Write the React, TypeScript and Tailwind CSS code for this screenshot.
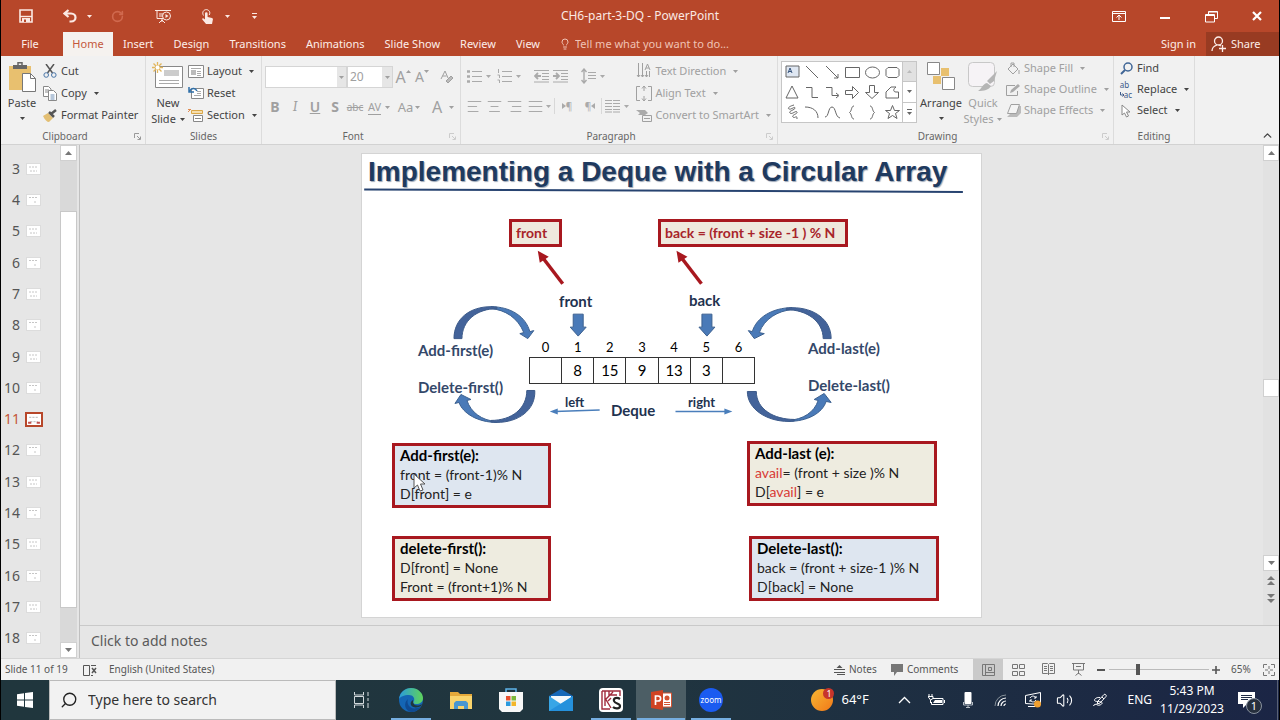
import type { ReactNode } from "react";
import {
  AlignCenter,
  AlignJustify,
  AlignLeft,
  AlignRight,
  ChevronUp,
  Lightbulb,
  RotateCw,
  Search,
  Volume2,
} from "lucide-react";

const TABS = ["Insert", "Design", "Transitions", "Animations", "Slide Show", "Review", "View"];
const THUMBNAILS = [3, 4, 5, 6, 7, 8, 9, 10, 11, 12, 13, 14, 15, 16, 17, 18];
const CURRENT_SLIDE = 11;
const DEQUE = ["", "8", "15", "9", "13", "3", ""];

function Icon({
  w = 16,
  h = 16,
  className = "",
  children,
}: {
  w?: number;
  h?: number;
  className?: string;
  children: ReactNode;
}) {
  return (
    <svg
      width={w}
      height={h}
      viewBox={`0 0 ${w} ${h}`}
      fill="none"
      stroke="currentColor"
      className={`shrink-0 ${className}`}
      aria-hidden="true"
    >
      {children}
    </svg>
  );
}

function Caret({ className = "" }: { className?: string }) {
  return (
    <Icon w={5} h={3} className={className}>
      <path d="M0 0h5L2.5 3z" fill="currentColor" stroke="none" />
    </Icon>
  );
}

function Launcher({ className = "" }: { className?: string }) {
  return (
    <button type="button" aria-label="More options" className={`absolute right-1 bottom-1 ${className}`}>
      <Icon w={7} h={7}>
        <path d="M.5 5V.5H5M3 3l3 3M6.5 3.5v3h-3" />
      </Icon>
    </button>
  );
}

function Group({
  label,
  className,
  launcher,
  children,
}: {
  label: string;
  className: string;
  launcher?: string;
  children: ReactNode;
}) {
  return (
    <section className={`relative flex shrink-0 flex-col border-r border-[#dcdcdc] ${className}`}>
      <div className="flex flex-1 pt-1">{children}</div>
      <div className="h-4 text-center text-[10px] leading-4 text-[#666]">{label}</div>
      {launcher ? <Launcher className={launcher} /> : null}
    </section>
  );
}

function Command({
  icon,
  label,
  caret,
  className = "h-[22px]",
}: {
  icon: ReactNode;
  label: string;
  caret?: boolean;
  className?: string;
}) {
  return (
    <button type="button" className={`flex items-center gap-[3px] whitespace-nowrap ${className}`}>
      <span className="flex w-4 justify-center">{icon}</span>
      {label}
      {caret ? <Caret className="ml-1" /> : null}
    </button>
  );
}

function Tool({ label, className, children }: { label: string; className: string; children: ReactNode }) {
  return (
    <button
      type="button"
      aria-label={label}
      className={`flex h-5 shrink-0 items-center justify-center ${className}`}
    >
      {children}
    </button>
  );
}

function Divider() {
  return <span className="h-4 w-px shrink-0 bg-[#d8d8d8]" />;
}

function TitleBar() {
  return (
    <div className="relative flex h-8 items-center text-[#fbe9e3]">
      <button type="button" aria-label="Save" className="ml-[18px]">
        <Icon w={14} h={14}>
          <path d="M1 1h12v12H1z" strokeWidth="1.6" />
          <path d="M1 7.5h12" strokeWidth="1.4" />
          <path d="M3 9h8v4H3z" fill="currentColor" stroke="none" />
          <path d="M5 10.500h2V13H5z" fill="#b7472a" stroke="none" />
        </Icon>
      </button>
      <button type="button" aria-label="Undo" className="ml-[30px] flex items-center gap-[10px]">
        <Icon w={14} h={14}>
          <path d="M5.500 1L1.500 4.500l4 3.500M2 4.500h6c6 0 6 8 0 8H6.500" strokeWidth="2.200" />
        </Icon>
        <Caret />
      </button>
      <button type="button" aria-label="Redo" className="ml-[19px] text-[#d0694e]">
        <RotateCw size={13} strokeWidth={3} />
      </button>
      <button type="button" aria-label="Start from beginning" className="ml-[31px]">
        <Icon w={17} h={15}>
          <path d="M0 1.500h16M2 2v7.500h6M4 5h4M4 7h3M7 10v3M4 14l3-3 3 3" />
          <circle cx="11.500" cy="7" r="4" />
          <path d="M10.500 5l3 2-3 2z" fill="currentColor" stroke="none" />
        </Icon>
      </button>
      <button type="button" aria-label="Touch mode" className="ml-[30px] flex items-center gap-[12px]">
        <Icon w={11} h={15}>
          <path
            d="M3 4.500a1.300 1.300 0 0 1 2.600 0V8l4.400 1c1 .3 1 1 .8 2l-.8 4H4L.3 10.500c-.5-1 .5-1.600 1.300-1L3 10.500z"
            fill="currentColor"
            stroke="none"
          />
          <path d="M1.500 6.500C-.5 3 2 .6 4.300.6S9 3 7.200 6" />
        </Icon>
        <Caret />
      </button>
      <button type="button" aria-label="Customize toolbar" className="ml-[22px]">
        <Icon w={5} h={6}>
          <path d="M0 .5h5" />
          <path d="M0 3h5L2.500 6z" fill="currentColor" stroke="none" />
        </Icon>
      </button>
      <h1 className="absolute left-1/2 -translate-x-1/2 text-xs whitespace-nowrap">CH6-part-3-DQ - PowerPoint</h1>
      <div className="mr-[17px] ml-auto flex items-center gap-[34px] text-white">
        <button type="button" aria-label="Ribbon display options">
          <Icon w={14} h={11}>
            <path d="M.5.500h13v10H.5zM.5 2.500h13M7 9V4M4.500 6.500L7 4l2.500 2.500" />
          </Icon>
        </button>
        <button type="button" aria-label="Minimize">
          <Icon w={11} h={12}>
            <path d="M0 8h10" strokeWidth="2" />
          </Icon>
        </button>
        <button type="button" aria-label="Restore">
          <Icon w={13} h={13}>
            <path d="M3.500 4V1.500h9v7H10M3.500 2h9" />
            <path d="M.5 4.500h9v7.500h-9zM.5 5.500h9" />
          </Icon>
        </button>
        <button type="button" aria-label="Close">
          <Icon w={10} h={10}>
            <path d="M1 1l8 8M9 1L1 9" strokeWidth="2.200" />
          </Icon>
        </button>
      </div>
    </div>
  );
}

function TabBar() {
  return (
    <nav className="flex h-6 items-center text-[11px] text-[#fdeee9]">
      <button type="button" className="w-[62px] pr-1">
        File
      </button>
      <button type="button" className="h-full w-[50px] bg-[#f5f2ef] text-[#c4593c]">
        Home
      </button>
      {TABS.map((tab) => (
        <button key={tab} type="button" className="px-[10px] whitespace-nowrap">
          {tab}
        </button>
      ))}
      <label className="ml-[9px] flex flex-1 items-center gap-1 text-[#f0c3b5]">
        <Lightbulb size={12} />
        <input
          aria-label="Tell me what you want to do"
          placeholder="Tell me what you want to do..."
          className="w-[180px] bg-transparent outline-none placeholder:text-[#f0c3b5]"
        />
      </label>
      <button type="button" className="mr-[10px]">
        Sign in
      </button>
      <button type="button" className="flex h-full w-[73px] items-center gap-1 bg-[#983b22] pl-[5px]">
        <Icon w={16} h={16}>
          <circle cx="7.500" cy="5" r="4" strokeWidth="1.300" />
          <path d="M1 15c0-3 2-5 5-6M8 9l2 1M8 12.500h7M11.500 9v7" strokeWidth="1.300" />
        </Icon>
        Share
      </button>
    </nav>
  );
}

function ClipboardGroup() {
  return (
    <Group label="Clipboard" className="w-[145px] pr-4" launcher="text-[#999]">
      <button type="button" className="ml-1 flex w-[34px] shrink-0 flex-col items-center pt-[2px]">
        <Icon w={28} h={30}>
          <path d="M1 4h22v24H1z" fill="#e8c06f" stroke="none" />
          <path d="M5 3h14v4H5z" fill="#666" stroke="none" />
          <path d="M10 3V.8h4V3" stroke="#666" strokeWidth="1.500" />
          <path d="M14.500 11.500h8l5 5v13h-13z" fill="#fff" stroke="#777" />
          <path d="M22.500 11.500v5h5" stroke="#777" />
        </Icon>
        <span className="mt-[3px] leading-4">Paste</span>
        <Caret className="mt-[6px]" />
      </button>
      <div className="ml-[3px] flex flex-col">
        <Command
          label="Cut"
          icon={
            <Icon w={14} h={14}>
              <path d="M3 0l6.500 9M11 0L4.500 9" stroke="#555" strokeWidth="1.500" />
              <circle cx="3.200" cy="11" r="2.300" stroke="#4a76a8" />
              <circle cx="10.800" cy="11" r="2.300" stroke="#4a76a8" />
            </Icon>
          }
        />
        <Command
          label="Copy"
          caret
          icon={
            <Icon w={14} h={15}>
              <path d="M.5.5h5l2.500 2.500v7.500H.5zM2 4h4M2 6h4" fill="#fff" stroke="#888" />
              <path d="M5.500 4.500h5l3 3v7h-8z" fill="#fff" stroke="#888" />
              <path d="M7.500 9h4M7.500 11h4M7.500 13h4" stroke="#6f8fb5" />
            </Icon>
          }
        />
        <Command
          label="Format Painter"
          icon={
            <Icon w={14} h={13}>
              <path d="M0 7l5-3 5 5-4 4c-2 0-4-2-6-6z" fill="#e3bf73" stroke="none" />
              <path d="M6 3l5 5M8 5l5-4" stroke="#555" strokeWidth="2.500" />
            </Icon>
          }
        />
      </div>
    </Group>
  );
}

function SlidesGroup() {
  return (
    <Group label="Slides" className="w-[116px]">
      <button type="button" className="ml-[4px] flex w-9 shrink-0 flex-col items-center pt-[2px]">
        <Icon w={32} h={30}>
          <path d="M3.500 4.500h27v21h-27z" fill="#fff" stroke="#888" />
          <path d="M12 8h15v6H12z" fill="#ccc" stroke="none" />
          <path d="M7 18.500h20M7 21.500h20" stroke="#aaa" />
          <path d="M5.500 0v11M0 5.500h11M1.500 1.500l8 8M9.500 1.500l-8 8" stroke="#e3b65c" strokeWidth="1.300" />
          <circle cx="5.500" cy="5.500" r="2" fill="#fff" stroke="none" />
        </Icon>
        <span className="mt-[3px] leading-4">New</span>
        <span className="flex items-center gap-1 leading-4">
          Slide
          <Caret />
        </span>
      </button>
      <div className="ml-[2px] flex flex-col">
        <Command
          label="Layout"
          caret
          icon={
            <Icon w={16} h={13}>
              <path d="M.5.5h15v12H.5z" fill="#fff" stroke="#888" />
              <path d="M3 3.500h10M9 6.500h4M9 8.500h4M9 10.500h4" stroke="#aaa" />
              <path d="M3 5h5v5H3z" fill="#bbb" stroke="none" />
            </Icon>
          }
        />
        <Command
          label="Reset"
          icon={
            <Icon w={16} h={14}>
              <path d="M3.500 2.500h12v10h-12z" fill="#fff" stroke="#888" />
              <path d="M9 5.500h4M9 7.500h4M6 9.500h7" stroke="#aaa" />
              <path d="M1 1v5h5M1.500 5.500C3 2 7 1 9 5" stroke="#2f6fa8" strokeWidth="1.500" />
            </Icon>
          }
        />
        <Command
          label="Section"
          caret
          icon={
            <Icon w={16} h={15}>
              <path d="M3.500 2.500h11v3h-11z" fill="#f6dfae" stroke="#d9a648" />
              <path d="M0 1.500h3M0 4l2-2" stroke="#e08b50" />
              <path d="M5.500 7.500h9v6h-9zM7 10.500h6" fill="#fff" stroke="#888" />
            </Icon>
          }
        />
      </div>
    </Group>
  );
}

function FontGroup() {
  return (
    <Group label="Font" className="w-[199px] pr-4" launcher="text-[#ccc]">
      <div className="flex flex-col gap-[9px] pt-[6px] pl-[3px] text-[#a0a0a0]">
        <div className="flex h-[22px] items-center">
          <span className="flex h-full w-[82px] border border-[#d5d5d5] bg-white">
            <input disabled aria-label="Font name" className="min-w-0 flex-1 px-1" />
            <span className="flex w-[9px] items-center justify-center bg-[#e6e6e6]">
              <Caret />
            </span>
          </span>
          <span className="flex h-full w-[46px] items-center border border-[#d5d5d5] bg-white text-xs">
            <select disabled aria-label="Font size" className="min-w-0 flex-1 appearance-none bg-transparent pl-[2px]">
              <option>20</option>
            </select>
            <span className="flex h-full w-[10px] items-center justify-center bg-[#e6e6e6]">
              <Caret />
            </span>
          </span>
          <Tool label="Increase font size" className="w-5 text-base">
            A<Caret className="mb-3 rotate-180" />
          </Tool>
          <Tool label="Decrease font size" className="w-[18px] text-sm">
            A<Caret className="mb-3" />
          </Tool>
          <span className="ml-1">
            <Divider />
          </span>
          <Tool label="Clear formatting" className="w-6">
            <Icon w={14} h={14}>
              <path d="M1 9l4-8 3 7M2.500 6h4" />
              <path d="M6 11l5-5 2 2-5 5z" fill="#bbb" />
            </Icon>
          </Tool>
        </div>
        <div className="flex items-center text-sm">
          <Tool label="Bold" className="w-5 font-bold">B</Tool>
          <Tool label="Italic" className="w-5 font-serif italic">I</Tool>
          <Tool label="Underline" className="w-5 font-semibold underline">U</Tool>
          <Tool label="Shadow" className="w-5 font-bold">S</Tool>
          <Tool label="Strikethrough" className="w-5 text-[10px] line-through">abc</Tool>
          <Tool label="Character spacing" className="w-7 gap-1 text-[11px]">
            <span className="border-b border-current leading-[14px]">AV</span>
            <Caret />
          </Tool>
          <Tool label="Change case" className="w-8 gap-[2px] text-[13px]">
            Aa
            <Caret />
          </Tool>
          <Tool label="Font color" className="w-9 gap-[7px] text-base">
            A
            <Caret />
          </Tool>
        </div>
      </div>
    </Group>
  );
}

function ParagraphGroup() {
  return (
    <Group label="Paragraph" className="w-[317px] pr-4" launcher="text-[#ccc]">
      <div className="flex flex-col gap-[10px] pt-[6px] pl-[3px] text-[#aaa]">
        <div className="flex items-center">
          <Tool label="Bullets" className="w-[30px] gap-1">
            <Icon w={15} h={14}>
              <path d="M5 2.500h10M5 7.500h10M5 12.500h10" />
              <path d="M0 2.500h3M0 7.500h3M0 12.500h3" strokeWidth="2.500" />
            </Icon>
            <Caret />
          </Tool>
          <Tool label="Numbering" className="w-[30px] gap-1">
            <Icon w={15} h={14}>
              <path d="M5 2.500h10M5 7.500h10M5 12.500h10M1.500 0v4M.5 6h2v3M.5 11h2v3" />
            </Icon>
            <Caret />
          </Tool>
          <span className="mx-1">
            <Divider />
          </span>
          <Tool label="Decrease indent" className="w-[19px]">
            <Icon w={15} h={14}>
              <path d="M0 1.500h15M8 4.500h7M8 7.500h7M8 10.500h7M0 13h15" />
              <path d="M7 7H1M4 4L1 7l3 3" strokeWidth="1.800" />
            </Icon>
          </Tool>
          <Tool label="Increase indent" className="w-[19px]">
            <Icon w={15} h={14}>
              <path d="M0 1.500h15M8 4.500h7M8 7.500h7M8 10.500h7M0 13h15" />
              <path d="M0 7h6M3 4l3 3-3 3" strokeWidth="1.800" />
            </Icon>
          </Tool>
          <span className="mx-1">
            <Divider />
          </span>
          <Tool label="Line spacing" className="w-[30px] gap-1">
            <Icon w={15} h={16}>
              <path d="M3 1v14M.5 4L3 1l2.500 3M.5 12L3 15l2.500-3" strokeWidth="1.400" />
              <path d="M7 4.500h8M7 7.500h8M7 10.500h8" />
            </Icon>
            <Caret />
          </Tool>
        </div>
        <div className="flex items-center">
          <Tool label="Align left" className="w-5">
            <AlignLeft size={17} strokeWidth={1.500} />
          </Tool>
          <Tool label="Center" className="w-5">
            <AlignCenter size={17} strokeWidth={1.500} />
          </Tool>
          <Tool label="Align right" className="w-5">
            <AlignRight size={17} strokeWidth={1.500} />
          </Tool>
          <Tool label="Justify" className="w-[30px] gap-[2px]">
            <AlignJustify size={17} strokeWidth={1.500} />
            <Caret />
          </Tool>
          <Divider />
          <Tool label="Left to right" className="w-6 text-[10px]">
            <Icon w={4} h={6}>
              <path d="M0 0l4 3-4 3z" fill="currentColor" stroke="none" />
            </Icon>
            ¶
          </Tool>
          <Tool label="Right to left" className="w-[22px] text-[10px]">
            ¶
            <Icon w={4} h={6}>
              <path d="M4 0L0 3l4 3z" fill="currentColor" stroke="none" />
            </Icon>
          </Tool>
          <Divider />
          <Tool label="Columns" className="w-[30px] gap-1">
            <Icon w={15} h={14}>
              <path d="M0 1.500h7M0 4.500h7M0 7.500h7M0 10.500h7M0 13h7M8 1.500h7M8 4.500h7M8 7.500h7M8 10.500h7M8 13h7" />
            </Icon>
            <Caret />
          </Tool>
        </div>
      </div>
      <div className="-mr-[10px] ml-auto flex flex-col text-[#a0a0a0]">
        <Command
          label="Text Direction"
          caret
          icon={
            <Icon w={16} h={16}>
              <path d="M2.500 0v14M6.500 0v14M10.500 8v6M13.500 8v6M1 12l1.500 2L4 12M5 12l1.500 2L8 12M9 12l1.500 2 1.500-2M9 7l2.500-6L14 7M10 5h3" />
            </Icon>
          }
        />
        <Command
          label="Align Text"
          caret
          icon={
            <Icon w={16} h={15}>
              <path d="M4 .5H.5v14H4M12 .5h3.500v14H12M8 0v5M8 15v-5M6 2.500L8 0l2 2.500M6 12.500L8 15l2-2.500" />
            </Icon>
          }
        />
        <Command
          label="Convert to SmartArt"
          caret
          icon={
            <Icon w={16} h={13}>
              <path d="M0 1h9l3 3-3 2H2l2-2z" fill="#aaa" stroke="none" />
              <path d="M6.500 6.500h9v6h-9zM8 9.500h6" fill="#f1f1f1" />
            </Icon>
          }
        />
      </div>
    </Group>
  );
}

const SHAPES = [
  "M2 2h13v11H2z",
  "M2 2l12 12",
  "M2 2l12 12M14 10v4h-4",
  "M1.500 3.500h14v10h-14z",
  "M15.500 8.500a7 5.500 0 1 1-14 0a7 5.500 0 1 1 14 0z",
  "M4 3.500h9l2 2v6l-2 2H4l-2-2v-6z",
  "M8 2l6 12H2z",
  "M2 3.500h6v10h6",
  "M2 3.500h6v8h6M12 9l3 2.500-3 2.500",
  "M1.500 6.500h7v-4l6 6-6 6v-4h-7z",
  "M5.500 1.500h5v7h4l-6.500 6-6.500-6h4z",
  "M2 14V8l5-5h5c-3 2-3 5 0 5h2.500v6z",
  "M10 1C6 2 3 4 5 5s6-3 6-1-7 3-5 5 6-3 7-1-6 3-4 5 4-3 4 2",
  "M1 3c8 0 13 4 13 11",
  "M1 13C5 13 4 3 8 3s3 10 8 11",
  "M10 2C7 2 8 7 5.500 8.500 8 10 7 15 10 15",
  "M6 2c3 0 2 5 4.500 6.500C8 10 9 15 6 15",
  "M8.500 1.500l2 5h5l-4 3 1.500 5-4.500-3-4.500 3 1.500-5-4-3h5z",
];

function DrawingGroup() {
  return (
    <Group label="Drawing" className="w-[336px] pr-4" launcher="text-[#ccc]">
      <div className="ml-[3px] mt-[1px] flex h-[62px] w-[136px] shrink-0 border border-[#c6c6c6] bg-white">
        <div className="grid flex-1 grid-cols-6 grid-rows-3 text-[#666]">
          {SHAPES.map((d, i) => (
            <button key={d} type="button" aria-label={`Shape ${i + 1}`} className="flex items-center justify-center">
              <Icon w={17} h={17}>
                <path d={d} fill={i === 0 ? "#dfe7f2" : "none"} />
                {i === 0 ? <path d="M4 9l2-5 2 5M5 7.500h2" stroke="#35537c" /> : null}
              </Icon>
            </button>
          ))}
        </div>
        <div className="flex w-[14px] flex-col divide-y divide-[#c6c6c6] border-l border-[#c6c6c6] text-[#666]">
          <button type="button" aria-label="Previous shapes" className="flex flex-1 items-center justify-center bg-[#e1e1e1] text-[#bbb]">
            <Caret className="rotate-180" />
          </button>
          <button type="button" aria-label="Next shapes" className="flex flex-1 items-center justify-center">
            <Caret />
          </button>
          <button type="button" aria-label="All shapes" className="flex flex-1 items-center justify-center">
            <Icon w={5} h={6}>
              <path d="M0 .5h5" />
              <path d="M0 3h5L2.500 6z" fill="currentColor" stroke="none" />
            </Icon>
          </button>
        </div>
      </div>
      <button type="button" className="ml-[3px] flex w-[42px] shrink-0 flex-col items-center pt-[2px]">
        <Icon w={28} h={30}>
          <path d="M14 6h8v8h-8zM6 14h8v8H6z" fill="#e8c06f" stroke="none" />
          <path d="M.5.500h12v12H.5zM15.500 15.500h12v12h-12z" fill="#fff" stroke="#888" />
        </Icon>
        <span className="mt-[3px] leading-4">Arrange</span>
        <Caret className="mt-[6px]" />
      </button>
      <button type="button" className="flex w-[42px] shrink-0 flex-col items-center pt-[2px] text-[#a0a0a0]">
        <Icon w={30} h={30}>
          <rect x=".5" y=".5" width="26" height="24" rx="4" fill="#f6f3f6" stroke="#c8c8c8" />
          <path d="M29 9l-3 10-4 3-3-3z" fill="#b5b5b5" stroke="none" />
          <path d="M19 21l4 3c-2 4-7 5-13 5 4-2 4-7 9-8z" fill="#b5b5b5" stroke="none" />
        </Icon>
        <span className="mt-[3px] leading-4">Quick</span>
        <span className="flex items-center gap-1 leading-4">
          Styles
          <Caret />
        </span>
      </button>
      <div className="-mt-[2px] ml-[1px] flex flex-col text-[#a0a0a0]">
        <Command
          label="Shape Fill"
          caret
          className="h-[21px]"
          icon={
            <Icon w={14} h={14}>
              <path d="M2 7l5-5 5 5-5 5zM5 5V1h3v4M13 8v4" fill="#f1f1f1" />
            </Icon>
          }
        />
        <Command
          label="Shape Outline"
          caret
          className="h-[21px]"
          icon={
            <Icon w={15} h={14}>
              <path d="M9 2.500H.5v10h11V8" />
              <path d="M4 10l1-3 7-6 2 2-7 6z" fill="#aaa" stroke="none" />
            </Icon>
          }
        />
        <Command
          label="Shape Effects"
          caret
          className="h-[21px]"
          icon={
            <Icon w={15} h={14}>
              <path d="M6 2h9v7l-4 4H1l3-3z" fill="#bbb" stroke="none" />
              <path d="M5 .5h8.500l-3 9H1.500z" fill="#f4f4f4" />
            </Icon>
          }
        />
      </div>
    </Group>
  );
}

function EditingGroup() {
  return (
    <Group label="Editing" className="w-[81px]">
      <div className="-mt-[2px] ml-[4px] flex flex-col">
        <Command
          label="Find"
          className="h-[21px]"
          icon={
            <Icon w={13} h={13}>
              <circle cx="8" cy="5" r="4" stroke="#3f6596" strokeWidth="1.500" />
              <path d="M5 8l-4 4" stroke="#3f6596" strokeWidth="2" />
            </Icon>
          }
        />
        <Command
          label="Replace"
          caret
          className="h-[21px]"
          icon={
            <span className="flex flex-col text-[8px] leading-[11px] text-[#3c5a8a]">
              <span className="text-left">ab</span>
              <span className="-mt-px flex items-center">
                <Icon w={4} h={5}>
                  <path d="M.5 0v3H4M2.500 1.500L4 3 2.500 4.500" />
                </Icon>
                ac
              </span>
            </span>
          }
        />
        <Command
          label="Select"
          caret
          className="h-[21px]"
          icon={
            <Icon w={10} h={14}>
              <path d="M1 1v10l2.500-2 2 4 2-1-2-4H9z" fill="#fff" stroke="#888" />
            </Icon>
          }
        />
      </div>
    </Group>
  );
}

function Ribbon() {
  return (
    <div className="flex h-[89px] shrink-0 overflow-hidden border-b border-[#d2d2d2] bg-[#f1f1f1] text-[11px] text-[#444]">
      <ClipboardGroup />
      <SlidesGroup />
      <FontGroup />
      <ParagraphGroup />
      <DrawingGroup />
      <EditingGroup />
      <button type="button" aria-label="Collapse the ribbon" className="mt-auto mr-[5px] mb-[2px] ml-auto">
        <ChevronUp size={13} strokeWidth={2.500} />
      </button>
    </div>
  );
}

function ScrollButton({ up, label }: { up?: boolean; label: string }) {
  return (
    <button
      type="button"
      aria-label={label}
      className="flex h-4 w-full shrink-0 items-center justify-center border border-[#d0d0d0] bg-white text-[#777]"
    >
      <Icon w={7} h={4} className={up ? "rotate-180" : ""}>
        <path d="M0 0h7L3.500 4z" fill="currentColor" stroke="none" />
      </Icon>
    </button>
  );
}

function ThumbnailPane() {
  return (
    <aside className="flex w-[79px] shrink-0 border-r border-[#c0c0c0]">
      <ol className="flex w-[59px] flex-col pt-2 pb-1 text-sm text-[#555]">
        {THUMBNAILS.map((n) => (
          <li key={n} className={`flex flex-1 items-center gap-[6px] ${n === CURRENT_SLIDE ? "text-[#c4553a]" : ""}`}>
            <span className="w-[19px] text-right leading-4">{n}</span>
            <button
              type="button"
              aria-label={`Slide ${n}`}
              className={
                n === CURRENT_SLIDE
                  ? "-ml-px h-[15px] w-[18px] border-2 border-[#b7472a] bg-white"
                  : "h-3 w-[15px] border border-[#dcdcdc] bg-white"
              }
            >
              <svg viewBox="0 0 13 10" className="h-full w-full" aria-hidden="true">
                <path d={n % 2 ? "M2 3h9M3 7h7" : "M2 2.500h9M7 7h3"} stroke="#c6c6c6" strokeDasharray="2 1" />
                {n === CURRENT_SLIDE ? <path d="M1 8h3M9 8h3" stroke="#c0504d" strokeWidth="2" /> : null}
              </svg>
            </button>
          </li>
        ))}
      </ol>
      <div className="flex w-[17px] flex-col bg-[#d9d9d9]">
        <ScrollButton up label="Scroll slides up" />
        <div className="flex-[50]" />
        <div className="flex-[396] border border-[#c8c8c8] bg-white" />
        <div className="flex-[34]" />
        <ScrollButton label="Scroll slides down" />
      </div>
    </aside>
  );
}

function CodeBox({ className, title, children }: { className: string; title: string; children: ReactNode }) {
  return (
    <div
      className={`absolute border-[3px] border-[#a8181f] px-[5px] pb-[2px] text-sm leading-[19px] whitespace-nowrap text-[#222] ${className}`}
    >
      <div className="text-[15px] leading-[19px] font-bold text-black">{title}</div>
      {children}
    </div>
  );
}

function SlideArrows() {
  return (
    <svg viewBox="362 153 620 464" className="absolute inset-0 h-full w-full" aria-hidden="true">
      <path d="M364 188.500L964 191" stroke="#274370" strokeWidth="2" />
      <g fill="#a8181f" stroke="#a8181f">
        <path d="M563 283L543 257" strokeWidth="3.500" />
        <path d="M538 250l11 6-9 6zM677 250l11 6-9 6z" stroke="none" />
        <path d="M702 283L682 257" strokeWidth="3.500" />
      </g>
      <g fill="#4a7ab8" stroke="#3c6090">
        <path d="M573.500 313.500h10v13h3l-8 9-8-9h3zM702.500 313.500h10v13h3l-8 9-8-9h3z" />
        <path d="M491 306c20 0 35 10 39 25l4-1-6 8-8-5 4-1c-6-15-19-23-33-24z" />
        <path d="M497 422c-19 0-34-9-38-20l-4 1 6-9 10 5-4 1c4 12 15 20 29 21z" />
        <path d="M793 307c-20 0-36 10-40 24l-4-1 6 8 10-5-5-1c5-14 19-22 33-23z" />
        <path d="M789 421c19 0 34-8 38-20l5 1-7-9-10 6 4 1c-4 12-15 19-30 20z" />
      </g>
      <g fill="#43639a" stroke="#3c5a8a">
        <path d="M454 338c0-20 16-32 37-32l6 .5v1.500c-20 0-35 12-35 30z" />
        <path d="M535 390c1 20-17 32-38 32l-6-.5v-1.500c21 0 36-12 36-30z" />
        <path d="M832 338c0-19-17-31-39-31l-6 .5v1.500c21 0 37 12 37 29z" />
        <path d="M748 391c0 18 20 30 41 30l6-.5v-1.500c-20 0-38-10-38-28z" />
      </g>
      <g fill="#4a7ebb" stroke="#4a7ebb">
        <path d="M600 409.500L555 411M676 411h52" strokeWidth="1.500" />
        <path d="M550 411l8-3v6zM733 411l-8-3v6z" stroke="none" />
      </g>
    </svg>
  );
}

function Slide() {
  return (
    <div className="relative h-[465px] w-[621px] border border-[#d4d4d4] bg-white font-['Lato','Carlito',sans-serif] text-[15px] leading-5 text-[#1f3350]">
      <SlideArrows />
      <h2 className="absolute top-0 left-[6px] font-['Liberation_Sans',Arial,sans-serif] text-[28px] leading-9 font-bold whitespace-nowrap text-[#1f3a5f] [text-shadow:1px_1px_1px_#9aa5b5]">
        Implementing a Deque with a Circular Array
      </h2>

      <div className="absolute top-[65px] left-[147px] flex h-7 w-[53px] items-center border-[3px] border-[#a8181f] bg-[#efe9dd] pl-1 text-sm font-bold text-[#a8242a]">
        front
      </div>
      <div className="absolute top-[65px] left-[296px] flex h-7 w-[190px] items-center border-[3px] border-[#a8181f] bg-[#efe9dd] pl-1 text-sm font-bold whitespace-nowrap text-[#a8242a]">
        back = (front + size -1 ) % N
      </div>

      <div className="absolute top-[137px] left-[197px] font-bold">front</div>
      <div className="absolute top-[136px] left-[327px] font-bold">back</div>

      <div className="absolute top-[186px] left-[56px] font-bold text-[#34486a]">Add-first(e)</div>
      <div className="absolute top-[223px] left-[56px] font-bold text-[#34486a]">Delete-first()</div>
      <div className="absolute top-[184px] left-[446px] font-bold text-[#34486a]">Add-last(e)</div>
      <div className="absolute top-[221px] left-[446px] font-bold text-[#34486a]">Delete-last()</div>

      <table className="absolute top-[183px] left-[167px] w-[226px] table-fixed border-collapse text-center text-black">
        <thead>
          <tr>
            {DEQUE.map((_, i) => (
              <th key={i} className="h-5 p-0 text-[13px] font-normal">
                {i}
              </th>
            ))}
          </tr>
        </thead>
        <tbody>
          <tr>
            {DEQUE.map((value, i) => (
              <td key={i} className="h-[26px] border border-[#333] p-0 text-[15px]">
                {value}
              </td>
            ))}
          </tr>
        </tbody>
      </table>

      <div className="absolute top-[238px] left-[203px] text-[13px] font-bold">left</div>
      <div className="absolute top-[246px] left-[249px] font-bold">Deque</div>
      <div className="absolute top-[238px] left-[326px] text-[13px] font-bold">right</div>

      <CodeBox className="top-[289px] left-[30px] w-[159px] bg-[#dee6f0]" title="Add-first(e):">
        <div>front = (front-1)% N</div>
        <div>D[front] = e</div>
      </CodeBox>
      <CodeBox className="top-[382px] left-[30px] w-[159px] bg-[#eeece0]" title="delete-first():">
        <div>D[front] = None</div>
        <div>Front = (front+1)% N</div>
      </CodeBox>
      <CodeBox className="top-[287px] left-[385px] w-[190px] bg-[#eeece0]" title="Add-last (e):">
        <div>
          <span className="text-[#d83a34]">avail</span>= (front + size )% N
        </div>
        <div>
          D[<span className="text-[#d83a34]">avail</span>] = e
        </div>
      </CodeBox>
      <CodeBox className="top-[382px] left-[387px] w-[190px] bg-[#dee6f0]" title="Delete-last():">
        <div>back = (front + size-1 )% N</div>
        <div>D[back] = None</div>
      </CodeBox>

      <Icon w={13} h={19} className="absolute top-[319px] left-[51px]">
        <path d="M1 1v14l3.500-3 2.500 6 3-1-2.500-6H12z" fill="#fff" stroke="#555" />
      </Icon>
    </div>
  );
}

function Editor() {
  return (
    <main className="flex min-w-0 flex-1 flex-col">
      <div className="flex min-h-0 flex-1">
        <div className="flex flex-1 items-center justify-center overflow-hidden">
          <Slide />
        </div>
        <div className="flex w-4 flex-col bg-[#e2e2e2]">
          <ScrollButton up label="Previous slide content" />
          <div className="flex-[218]" />
          <div className="h-[18px] border border-[#d0d0d0] bg-white" />
          <div className="flex-[158]" />
          <ScrollButton label="Next slide content" />
          <button type="button" aria-label="Previous slide" className="flex h-[18px] items-center justify-center text-[#777]">
            <Icon w={8} h={9}>
              <path d="M0 4h8L4 0zM0 9h8L4 5z" fill="currentColor" stroke="none" />
            </Icon>
          </button>
          <button type="button" aria-label="Next slide" className="mb-[18px] flex h-[18px] items-center justify-center text-[#777]">
            <Icon w={8} h={9}>
              <path d="M0 0h8L4 4zM0 5h8L4 9z" fill="currentColor" stroke="none" />
            </Icon>
          </button>
        </div>
      </div>
      <input
        aria-label="Notes"
        placeholder="Click to add notes"
        className="h-[33px] shrink-0 border-t border-[#c9c9c9] bg-transparent px-[11px] pb-[3px] text-sm outline-none placeholder:text-[#5a5a5a]"
      />
    </main>
  );
}

function StatusBar() {
  return (
    <footer className="flex h-[22px] shrink-0 items-center border-t border-[#d5d5d5] bg-[#f1f1f1] text-[10px] whitespace-nowrap text-[#555]">
      <span className="ml-1 w-[78px]">Slide 11 of 19</span>
      <button type="button" aria-label="Spelling" className="w-[26px]">
        <Icon w={14} h={12}>
          <path d="M6.500 1.500v10H.5v-10zM8 1.500h5M8 11.500h2" />
          <path d="M9 4l4 5M13 4L9 9" strokeWidth="1.500" />
        </Icon>
      </button>
      <span>English (United States)</span>
      <button type="button" className="ml-auto flex w-[57px] items-center gap-1">
        <Icon w={11} h={10}>
          <path d="M0 4.500h11M0 7.500h11M3 9.500h8" />
          <path d="M5.500 0l3 3h-6z" fill="currentColor" stroke="none" />
        </Icon>
        Notes
      </button>
      <button type="button" className="flex w-[82px] items-center gap-1">
        <Icon w={12} h={12}>
          <path d="M0 0h12v8H6l-3 4V8H0z" fill="#777" stroke="none" />
        </Icon>
        Comments
      </button>
      <button
        type="button"
        aria-label="Normal view"
        className="flex h-full w-[30px] items-center justify-center bg-[#cacaca] text-[#777]"
      >
        <Icon w={13} h={12}>
          <path d="M.5.500h12v11H.5zM3.500.500v11M3.500 8.500h9M6.500 3.500h3v3h-3z" />
        </Icon>
      </button>
      <button type="button" aria-label="Slide sorter" className="flex w-[30px] justify-center text-[#777]">
        <Icon w={13} h={12}>
          <path d="M.5.500h5v4h-5zM7.500.500h5v4h-5zM.5 7.500h5v4h-5zM7.500 7.500h5v4h-5z" />
        </Icon>
      </button>
      <button type="button" aria-label="Reading view" className="flex w-[30px] justify-center text-[#777]">
        <Icon w={13} h={13}>
          <path d="M.5.500h5l1 1 1-1h5v10h-5l-1 1-1-1h-5zM6.500 2v10M2 3.500h3M2 5.500h3M2 7.500h3M8 3.500h3M8 5.500h3M8 7.500h3" />
        </Icon>
      </button>
      <button type="button" aria-label="Slide show" className="flex w-[30px] justify-center text-[#777]">
        <Icon w={13} h={13}>
          <path d="M0 .500h13M1.500 1v6h10V1M6.500 7v4M3.500 12.500l3-2.500 3 2.500M4 3.500h5" />
        </Icon>
      </button>
      <button type="button" aria-label="Zoom out" className="flex w-4 justify-center">
        <Icon w={8} h={2}>
          <path d="M0 1h8" strokeWidth="2" />
        </Icon>
      </button>
      <input
        type="range"
        aria-label="Zoom"
        min={0}
        max={100}
        defaultValue={28}
        className="h-3 w-[100px] appearance-none bg-[linear-gradient(#bbb,#bbb)] bg-[length:100%_1px] bg-center bg-no-repeat [&::-webkit-slider-thumb]:h-[11px] [&::-webkit-slider-thumb]:w-1 [&::-webkit-slider-thumb]:appearance-none [&::-webkit-slider-thumb]:bg-[#555]"
      />
      <button type="button" aria-label="Zoom in" className="flex w-[14px] justify-center">
        <Icon w={8} h={8}>
          <path d="M0 4h8M4 0v8" strokeWidth="1.600" />
        </Icon>
      </button>
      <span className="ml-2 w-[32px]">65%</span>
      <button type="button" aria-label="Fit slide to window" className="mr-1 text-[#777]">
        <Icon w={12} h={12}>
          <path d="M.5 4V.500H4M8 .500h3.500V4M11.500 8v3.500H8M4 11.500H.5V8M6 2v3M6 10V7M2 6h3M10 6H7" />
        </Icon>
      </button>
    </footer>
  );
}

function TaskButton({ label, className = "", children }: { label: string; className?: string; children: ReactNode }) {
  return (
    <button
      type="button"
      aria-label={label}
      className={`relative flex h-full w-[50px] shrink-0 items-center justify-center ${className}`}
    >
      {children}
    </button>
  );
}

function Running({ className = "inset-x-[5px]" }: { className?: string }) {
  return <span className={`absolute bottom-0 h-[2px] bg-[#76aee0] ${className}`} />;
}

function TaskBar() {
  return (
    <div className="flex h-10 shrink-0 items-center bg-linear-to-r from-[#20363d] via-[#20353f] to-[#1b2545] text-xs text-white">
      <button type="button" aria-label="Start" className="flex h-full w-12 shrink-0 items-center justify-center">
        <Icon w={16} h={16}>
          <path d="M0 2.200L7 1.200V7.500H0zM8 1l8-1v7.500H8zM0 8.500h7v6.300l-7-1zM8 8.500h8V16l-8-1z" fill="#fff" stroke="none" />
        </Icon>
      </button>
      <label className="flex h-full w-[287px] shrink-0 items-center gap-[10px] border border-[#bbb] bg-[#f2f2f2] pl-[10px] text-[#222]">
        <Search size={18} strokeWidth={1.800} className="-scale-x-100" />
        <input
          aria-label="Search"
          placeholder="Type here to search"
          className="w-[220px] bg-transparent text-sm outline-none placeholder:text-[#333]"
        />
      </label>
      <TaskButton label="Task view">
        <Icon w={17} h={16} className="text-[#d4dadd]">
          <path d="M1.500 0v3h9V0M1.500 16v-3h9v3M1.500 4.500h9v7h-9zM15 0v4M15 6v3M15 11v5" />
        </Icon>
      </TaskButton>
      <TaskButton label="Microsoft Edge">
        <Icon w={24} h={24}>
          <defs>
            <linearGradient id="edge-top" x1="0" x2="1">
              <stop offset="0" stopColor="#2a9bdc" />
              <stop offset="1" stopColor="#5fd35a" />
            </linearGradient>
          </defs>
          <circle cx="12" cy="12" r="12" fill="#1465b4" stroke="none" />
          <path d="M0 11C1 4 6 0 12 0c7 0 12 5 12 10 0 4-3 6-7 6-3 0-3-2-2-3 1-3-1-6-5-6-5 0-9 2-10 4z" fill="url(#edge-top)" stroke="none" />
          <path d="M9 11c-2 5 2 11 9 9 2 0 3-1 4-2-2 4-6 6-10 6-6-1-8-9-3-13z" fill="#0f4a92" stroke="none" />
          <path d="M14 14c0 3 4 5 9 2l-1 2c-3 2-9 2-10-1-1-2 0-4 2-5z" fill="#20363d" stroke="none" />
        </Icon>
        <Running />
      </TaskButton>
      <TaskButton label="File Explorer">
        <Icon w={22} h={19}>
          <path d="M0 1h8l2 2h12v14H0z" fill="#e5a93a" stroke="none" />
          <path d="M0 5h22v13H0z" fill="#fad46c" stroke="none" />
          <path d="M4 18v-6l2-2h10l2 2v6h-4v-3H8v3z" fill="#4a97d0" stroke="none" />
        </Icon>
      </TaskButton>
      <TaskButton label="Microsoft Store">
        <Icon w={24} h={24}>
          <path d="M7 5V1h10v4" stroke="#5db4ea" strokeWidth="1.500" />
          <path d="M0 4h24v17l-3 3H3l-3-3z" fill="#f7f7f7" stroke="none" />
          <path d="M7 8h4.500v4.500H7z" fill="#e8502f" stroke="none" />
          <path d="M12.500 8H17v4.500h-4.500z" fill="#7cb83a" stroke="none" />
          <path d="M7 13.500h4.500V18H7z" fill="#2c9ade" stroke="none" />
          <path d="M12.500 13.500H17V18h-4.500z" fill="#f3b62a" stroke="none" />
        </Icon>
      </TaskButton>
      <TaskButton label="Mail">
        <Icon w={24} h={22}>
          <path d="M0 7l12-7 12 7v15H0z" fill="#1668b8" stroke="none" />
          <path d="M2 7h20v8H2z" fill="#f4f8fb" stroke="none" />
          <path d="M0 7l12 8 12-8v15H0z" fill="#38a6e6" stroke="none" />
          <path d="M0 22l24-15v15z" fill="#2591dc" stroke="none" />
        </Icon>
      </TaskButton>
      <TaskButton label="KS">
        <Icon w={24} h={24}>
          <rect width="24" height="24" rx="4" fill="#fff" stroke="none" />
          <path d="M3 3h18v5M3 3v18h8M6 3v15M6 12l8-8M6 10l6 10M10 3v4l8 0M9 13l3-3" stroke="#a02b3c" strokeWidth="1.400" />
          <path d="M21 11c-3-2-7-1-6 2s6 2 6 5-5 3-7 1" stroke="#222" strokeWidth="2.200" />
        </Icon>
        <Running />
      </TaskButton>
      <TaskButton label="PowerPoint" className="bg-[#4c5e65]">
        <Icon w={21} h={20}>
          <path d="M11 3h9.500v14H11z" fill="#fff" stroke="#d35230" />
          <path d="M13 12.500h6M13 14.500h6" stroke="#d35230" />
          <circle cx="16" cy="8" r="2.500" fill="#d35230" stroke="none" />
          <path d="M0 2l12-2v20L0 18z" fill="#d04423" stroke="none" />
          <path d="M4.500 15V6h2.500c3.500 0 3.500 5 0 5H4.500" stroke="#fff" strokeWidth="1.700" />
        </Icon>
        <Running className="inset-x-px" />
      </TaskButton>
      <TaskButton label="Zoom">
        <span className="flex size-6 items-center justify-center rounded-full bg-[#1b5bf0] text-[8px] leading-none">zoom</span>
        <Running />
      </TaskButton>

      <div className="ml-auto flex h-full shrink-0 items-center">
        <button type="button" className="flex w-[82px] items-center gap-2 text-[13px]">
          <span className="relative size-[22px] rounded-full bg-linear-to-br from-[#f7b733] to-[#f07818]">
            <span className="absolute -top-px -right-px flex size-[11px] items-center justify-center rounded-full bg-[#c7352b] text-[9px] leading-none">
              1
            </span>
          </span>
          64°F
        </button>
        <button type="button" aria-label="Show hidden icons" className="flex w-[22px] justify-center">
          <Icon w={13} h={8}>
            <path d="M1 7l5.500-5.500L12 7" strokeWidth="1.300" />
          </Icon>
        </button>
        <button type="button" aria-label="Battery" className="flex w-[42px] justify-center">
          <Icon w={17} h={12}>
            <path d="M5 4.500h10v6H3.500V8M16.500 6v3" />
            <path d="M7 6h7v3H5z" fill="currentColor" stroke="none" />
            <path d="M1 0v2M4 0v2M0 2.500h5v2L2.500 6z M2.500 6v3" />
          </Icon>
        </button>
        <button type="button" aria-label="Microphone" className="flex w-[22px] justify-center">
          <Icon w={10} h={16}>
            <rect x="1.500" width="7" height="12" rx="1" fill="currentColor" stroke="none" />
            <path d="M.5 10v3h9v-3M5 13v2.500M3 15.500h4" stroke="#b8c0c8" />
          </Icon>
        </button>
        <button type="button" aria-label="Network" className="flex w-[42px] justify-center">
          <Icon w={13} h={13}>
            <path d="M1 12A11 11 0 0 1 12 1" stroke="#87919a" />
            <path d="M4 12a8 8 0 0 1 8-8M7 12a5 5 0 0 1 5-5M10 12a2 2 0 0 1 2-2" strokeWidth="1.200" />
          </Icon>
        </button>
        <button type="button" aria-label="Updates" className="flex w-6 justify-center">
          <Icon w={17} h={16}>
            <path d="M.5 3.500l15-3v12l-15-1zM3 14.500h7" />
            <path d="M5 6c2-3 5-2 6 0M11 4v2H9M11 8c-2 3-5 2-6 0M5 10V8h2" />
            <circle cx="12.500" cy="12" r="3.500" fill="#f0a030" stroke="none" />
          </Icon>
        </button>
        <button type="button" aria-label="Volume" className="flex w-[38px] justify-center">
          <Volume2 size={17} strokeWidth={1.500} />
        </button>
        <button type="button" aria-label="Pen" className="flex w-[34px] justify-center">
          <Icon w={14} h={14}>
            <path d="M5 8l6-6.500c1-1 3 1 2 2L7 10l-3 1zM9 4l2 2" />
            <path d="M7 4.500C4 4 1 6 1.500 7.500S8 8 9 9.500 6 13 4.500 12 1 11 .5 13" />
          </Icon>
        </button>
        <button type="button" className="ml-[10px]">
          ENG
        </button>
        <button type="button" className="w-[80px] text-center leading-[18px]">
          <span className="block">5:43 PM</span>
          <span className="block">11/29/2023</span>
        </button>
        <button type="button" aria-label="Notifications" className="relative ml-[6px] flex w-[39px] items-center">
          <Icon w={17} h={17}>
            <path d="M0 0h17v12H9l-4 4v-4H0z" fill="#fff" stroke="none" />
            <path d="M3 3.500h11M3 5.500h11M3 7.500h7" stroke="#1f2b45" />
          </Icon>
          <span className="absolute top-[6px] left-2 flex size-4 items-center justify-center rounded-full border border-[#8a93a0] bg-[#262f3d] text-[11px] leading-none">
            1
          </span>
        </button>
        <span className="mr-px h-full w-px bg-[#5a6275]" />
      </div>
    </div>
  );
}

export default function App() {
  return (
    <div className="flex h-screen flex-col overflow-hidden border-x border-black bg-[#e6e6e6] font-['Noto_Sans','Open_Sans',sans-serif]">
      <header className="shrink-0 bg-[#b7472a]">
        <TitleBar />
        <TabBar />
      </header>
      <Ribbon />
      <div className="flex min-h-0 flex-1">
        <ThumbnailPane />
        <Editor />
      </div>
      <StatusBar />
      <TaskBar />
    </div>
  );
}
